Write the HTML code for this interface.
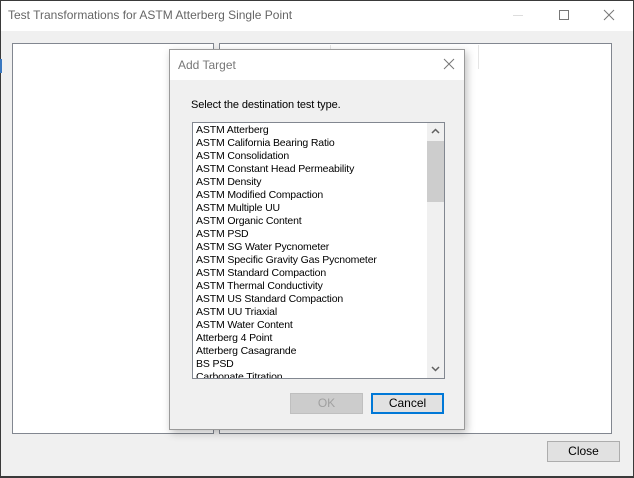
<!DOCTYPE html>
<html><head><style>
*{margin:0;padding:0;box-sizing:border-box}
body{width:634px;height:478px;overflow:hidden;background:#f0f0f0;font-family:"Liberation Sans",sans-serif;font-size:11px;color:#000;position:relative}
.abs{position:absolute}
</style></head><body>
<div class="abs" style="left:0;top:0;width:634px;height:478px;border:1px solid #3a3a3a;border-bottom:2px solid #3a3a3a;background:#f0f0f0"></div>
<div class="abs" style="left:1px;top:1px;width:632px;height:30px;background:#fff"></div>
<div class="abs" style="left:8px;top:8px;font-size:12px;color:#666">Test Transformations for ASTM Atterberg Single Point</div>
<div class="abs" style="left:513px;top:15px;width:10px;height:1px;background:#ddd"></div>
<div class="abs" style="left:559px;top:10px;width:10px;height:10px;border:1px solid #777"></div>
<svg class="abs" style="left:603px;top:9px" width="12" height="12"><path d="M1 1L11 11M11 1L1 11" stroke="#777" stroke-width="1"/></svg>
<div class="abs" style="left:0;top:59px;width:2px;height:14px;background:#3a78c0"></div>
<div class="abs" style="left:12px;top:43px;width:202px;height:391px;border:1px solid #828790;background:#fff"></div>
<div class="abs" style="left:219px;top:43px;width:393px;height:391px;border:1px solid #828790;background:#fff"></div>
<div class="abs" style="left:330px;top:45px;width:1px;height:20px;background:#e5e5e5"></div>
<div class="abs" style="left:478px;top:45px;width:1px;height:24px;background:#e5e5e5"></div>
<div class="abs" style="left:547px;top:441px;width:73px;height:21px;border:1px solid #adadad;background:#e1e1e1;text-align:center;line-height:19px;font-size:12px">Close</div>
<!-- dialog -->
<div class="abs" style="left:169px;top:49px;width:296px;height:381px;border:1px solid #9a9a9a;background:#f0f0f0;box-shadow:2px 3px 8px rgba(0,0,0,0.25)"></div>
<div class="abs" style="left:170px;top:50px;width:294px;height:30px;background:#fff"></div>
<div class="abs" style="left:178px;top:58px;font-size:12px;color:#777">Add Target</div>
<svg class="abs" style="left:443px;top:58px" width="12" height="12"><path d="M1 1L11 11M11 1L1 11" stroke="#777" stroke-width="1"/></svg>
<div class="abs" style="left:191px;top:99px;font-size:11px;letter-spacing:-0.1px">Select the destination test type.</div>
<div class="abs" style="left:192px;top:122px;width:253px;height:257px;border:1px solid #828790;background:#fff;overflow:hidden">
<div style="position:absolute;left:3px;top:1px;line-height:13px;font-size:10.5px;letter-spacing:-0.15px;white-space:nowrap">
ASTM Atterberg<br>ASTM California Bearing Ratio<br>ASTM Consolidation<br>ASTM Constant Head Permeability<br>ASTM Density<br>ASTM Modified Compaction<br>ASTM Multiple UU<br>ASTM Organic Content<br>ASTM PSD<br>ASTM SG Water Pycnometer<br>ASTM Specific Gravity Gas Pycnometer<br>ASTM Standard Compaction<br>ASTM Thermal Conductivity<br>ASTM US Standard Compaction<br>ASTM UU Triaxial<br>ASTM Water Content<br>Atterberg 4 Point<br>Atterberg Casagrande<br>BS PSD<br>Carbonate Titration</div>
<div style="position:absolute;left:234px;top:0;width:17px;height:255px;background:#f0f0f0"></div>
<div style="position:absolute;left:234px;top:18px;width:17px;height:61px;background:#cdcdcd"></div>
<svg style="position:absolute;left:238px;top:5px" width="9" height="7"><path d="M1 5L4.5 1.5L8 5" stroke="#606060" stroke-width="1.5" fill="none"/></svg>
<svg style="position:absolute;left:238px;top:242px" width="9" height="7"><path d="M1 2L4.5 5.5L8 2" stroke="#606060" stroke-width="1.5" fill="none"/></svg>
</div>
<div class="abs" style="left:290px;top:393px;width:73px;height:21px;border:1px solid #bfbfbf;background:#cccccc;color:#a0a0a0;text-align:center;line-height:19px;font-size:12px">OK</div>
<div class="abs" style="left:371px;top:393px;width:73px;height:21px;border:2px solid #0078d7;background:#e1e1e1;text-align:center;line-height:17px;font-size:12px">Cancel</div>
</body></html>
